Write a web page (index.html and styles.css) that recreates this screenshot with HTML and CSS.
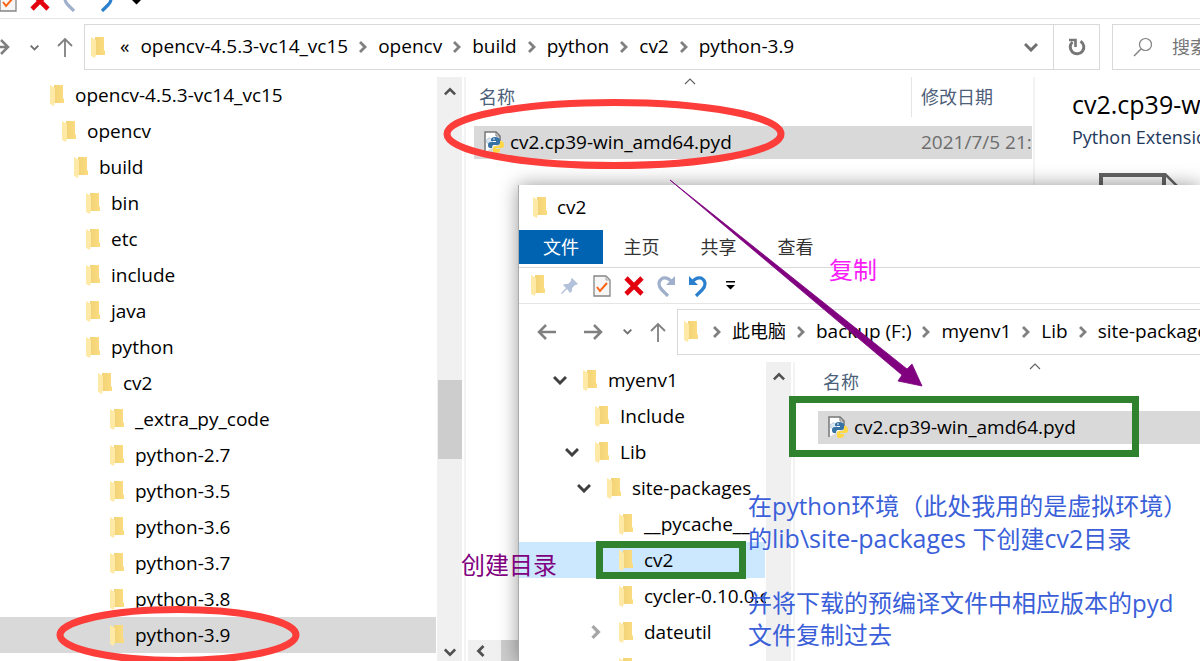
FILE: index.html
```html
<!DOCTYPE html>
<html lang="zh-CN">
<head>
<meta charset="utf-8">
<title>cv2</title>
<link rel="stylesheet" href="styles.css">
</head>
<body>
<svg class="defs" aria-hidden="true">
  <defs>
    <linearGradient id="fold-back" x1="0" x2="1"><stop offset="0" stop-color="#efcf72"/><stop offset="1" stop-color="#fbdc80"/></linearGradient>
    <symbol id="folder" viewBox="0 0 14 21"><path d="M0 0H13V13L14 14V18H4V0Z" fill="url(#fold-back)"/><path d="M0 0L5 3V16L4 21L0 19Z" fill="#ffe9a6"/></symbol>
    <symbol id="chev-right" viewBox="0 0 8 12"><path d="M1 1L6 6L1 11" fill="none" stroke="currentColor" stroke-width="2.8"/></symbol>
    <symbol id="chev-down" viewBox="0 0 14 10"><path d="M1 2L7 8L13 2" fill="none" stroke="currentColor" stroke-width="3"/></symbol>
    <symbol id="chev-up" viewBox="0 0 14 10"><path d="M1 9L7 3L13 9" fill="none" stroke="currentColor" stroke-width="3"/></symbol>
    <symbol id="sort" viewBox="0 0 12 7"><path d="M1 6L6 1L11 6" fill="none" stroke="#606060" stroke-width="1.1"/></symbol>
    <symbol id="arrow-left" viewBox="0 0 20 16"><path d="M19 8H2M9 1L2 8L9 15" fill="none" stroke="#808080" stroke-width="2.5"/></symbol>
    <symbol id="arrow-right" viewBox="0 0 20 16"><path d="M1 8H18M11 1L18 8L11 15" fill="none" stroke="#808080" stroke-width="2.5"/></symbol>
    <symbol id="arrow-up" viewBox="0 0 16 20"><path d="M8 20V2M1 9L8 2L15 9" fill="none" stroke="#808080" stroke-width="1.8"/></symbol>
    <symbol id="pin" viewBox="0 0 18 18"><path d="M11 1L17 7L15 8L14 8L11 11L11 14L9 16L6 12L1 17L0 17L1 15L5 11L2 8L4 7L7 7L10 4L10 2Z" fill="#b3c2da"/></symbol>
    <symbol id="check-page" viewBox="0 0 18 22"><path d="M1 1H13L17 5V21H1Z" fill="#f6f6f6" stroke="#858585" stroke-width="1.3"/><path d="M13 1V5H17" fill="none" stroke="#a5a5a5"/><path d="M4 12L7 16L14 8" fill="none" stroke="#fa6414" stroke-width="2"/></symbol>
    <symbol id="cross" viewBox="0 0 20 20"><path d="M2 2L18 18M18 2L2 18" stroke="#e3000f" stroke-width="4.6"/></symbol>
    <symbol id="undo" viewBox="0 0 20 22"><path d="M4 7Q8 2 13 3Q17 5 17 9Q17 12 14 15L8 21" fill="none" stroke="currentColor" stroke-width="3.2"/><path d="M1 1V10H10Z" fill="currentColor"/></symbol>
    <symbol id="redo" viewBox="0 0 20 22"><path d="M16 7Q12 2 7 3Q3 5 3 9Q3 12 6 15L12 21" fill="none" stroke="currentColor" stroke-width="3.2"/><path d="M19 1V10H10Z" fill="currentColor"/></symbol>
    <symbol id="more" viewBox="0 0 10 9"><path d="M1 0H10V1.500H1ZM1 4H10L5.500 8.500Z" fill="#000"/></symbol>
    <symbol id="refresh" viewBox="0 0 18 18"><path d="M12.500 3.200A6.800 6.800 0 1 1 4.500 4" fill="none" stroke="#777" stroke-width="3"/><path d="M1 2H7.500V9" fill="none" stroke="#777" stroke-width="2.6"/></symbol>
    <symbol id="search" viewBox="0 0 20 20"><circle cx="12.500" cy="7.500" r="6" fill="none" stroke="#808080" stroke-width="1.200"/><path d="M8 12L1 19" stroke="#808080" stroke-width="1.500"/></symbol>
    <symbol id="pyd" viewBox="0 0 20 22"><path d="M1 21V1H12L16 5V12" fill="#fff" stroke="#777" stroke-width="1.500"/><path d="M12 1V5H16" fill="none" stroke="#777"/><circle cx="5.500" cy="10" r="3" fill="#dbe7f2" stroke="#9ab8d2" stroke-dasharray="1.500 1"/><path d="M7 9Q7 6 11 6Q16 6 16 9V12Q16 14 13.500 14H10Q8 14 8 17H6Q4 17 4 14Q4 11 7 11H12V10H7Z" fill="#3672a4"/><path d="M16 10H18Q20 11 20 14Q20 17 18 17H12V18H16V20Q15 22 12 22Q9 22 9 20V17Q9 15 11 15H14Q16 15 16 12Z" fill="#ffd845"/><circle cx="10" cy="8" r=".8" fill="#fff"/></symbol>
  </defs>
</svg>

<main class="desktop">
  <section class="window back">
    <div class="quick">
      <button class="tool" aria-label="属性"><svg class="i-page"><use href="#check-page"/></svg></button>
      <button class="tool" aria-label="删除"><svg class="i-cross"><use href="#cross"/></svg></button>
      <button class="tool pale" aria-label="恢复"><svg class="i-undo"><use href="#redo"/></svg></button>
      <button class="tool blue" aria-label="撤消"><svg class="i-undo"><use href="#undo"/></svg></button>
      <button class="tool" aria-label="自定义"><svg class="i-more"><use href="#more"/></svg></button>
    </div>
    <div class="navbar">
      <button class="nav-btn" aria-label="前进"><svg class="i-arrow"><use href="#arrow-right"/></svg></button>
      <button class="nav-btn recent" aria-label="最近"><svg class="i-small"><use href="#chev-down"/></svg></button>
      <button class="nav-btn up" aria-label="上移"><svg class="i-up"><use href="#arrow-up"/></svg></button>
      <nav class="address">
        <svg class="i-folder"><use href="#folder"/></svg>
        <span class="dots">«</span>
        <a href="#a">opencv-4.5.3-vc14_vc15</a><svg class="sep"><use href="#chev-right"/></svg>
        <a href="#a">opencv</a><svg class="sep"><use href="#chev-right"/></svg>
        <a href="#a">build</a><svg class="sep"><use href="#chev-right"/></svg>
        <a href="#a">python</a><svg class="sep"><use href="#chev-right"/></svg>
        <a href="#a">cv2</a><svg class="sep"><use href="#chev-right"/></svg>
        <a href="#a">python-3.9</a>
        <button class="drop" aria-label="展开"><svg class="i-chev"><use href="#chev-down"/></svg></button>
        <button class="refresh" aria-label="刷新"><svg class="i-refresh"><use href="#refresh"/></svg></button>
      </nav>
      <label class="search"><svg class="i-search"><use href="#search"/></svg><input type="text" placeholder="搜索" aria-label="搜索"></label>
    </div>
    <div class="panes">
      <ul class="tree tree-back">
        <li class="d0"><svg class="i-folder"><use href="#folder"/></svg>opencv-4.5.3-vc14_vc15</li>
        <li class="d1"><svg class="i-folder"><use href="#folder"/></svg>opencv</li>
        <li class="d2"><svg class="i-folder"><use href="#folder"/></svg>build</li>
        <li class="d3"><svg class="i-folder"><use href="#folder"/></svg>bin</li>
        <li class="d3"><svg class="i-folder"><use href="#folder"/></svg>etc</li>
        <li class="d3"><svg class="i-folder"><use href="#folder"/></svg>include</li>
        <li class="d3"><svg class="i-folder"><use href="#folder"/></svg>java</li>
        <li class="d3"><svg class="i-folder"><use href="#folder"/></svg>python</li>
        <li class="d4"><svg class="i-folder"><use href="#folder"/></svg>cv2</li>
        <li class="d5"><svg class="i-folder"><use href="#folder"/></svg>_extra_py_code</li>
        <li class="d5"><svg class="i-folder"><use href="#folder"/></svg>python-2.7</li>
        <li class="d5"><svg class="i-folder"><use href="#folder"/></svg>python-3.5</li>
        <li class="d5"><svg class="i-folder"><use href="#folder"/></svg>python-3.6</li>
        <li class="d5"><svg class="i-folder"><use href="#folder"/></svg>python-3.7</li>
        <li class="d5"><svg class="i-folder"><use href="#folder"/></svg>python-3.8</li>
        <li class="d5 picked"><svg class="i-folder"><use href="#folder"/></svg>python-3.9</li>
      </ul>
      <div class="scroll">
        <svg class="i-scroll"><use href="#chev-up"/></svg>
        <div class="thumb"></div>
        <svg class="i-scroll"><use href="#chev-down"/></svg>
      </div>
      <div class="files">
        <div class="heads">
          <button class="head name">名称<svg class="i-sort"><use href="#sort"/></svg></button>
          <button class="head date">修改日期</button>
        </div>
        <div class="file"><svg class="i-pyd"><use href="#pyd"/></svg><span class="fname">cv2.cp39-win_amd64.pyd</span><span class="fdate">2021/7/5 21:35</span></div>
        <div class="hscroll"><svg class="i-left"><use href="#chev-right"/></svg><div class="hthumb"></div></div>
      </div>
      <aside class="details">
        <h2>cv2.cp39-win_amd64.pyd</h2>
        <p>Python Extension Module</p>
        <svg class="big-page" viewBox="0 0 100 80"><path d="M2 80V2H66L98 34V80" fill="#f5f5f5" stroke="#636363" stroke-width="4"/><path d="M65 2V34H98" fill="#fff" stroke="#636363" stroke-width="4"/></svg>
      </aside>
    </div>
  </section>

  <section class="window front">
    <header class="title"><svg class="i-folder"><use href="#folder"/></svg>cv2</header>
    <div class="tabs">
      <button class="tab active">文件</button><button class="tab">主页</button><button class="tab">共享</button><button class="tab">查看</button>
    </div>
    <div class="quick">
      <button class="tool" aria-label="文件夹"><svg class="i-folder"><use href="#folder"/></svg></button>
      <button class="tool" aria-label="固定"><svg class="i-pin"><use href="#pin"/></svg></button>
      <button class="tool" aria-label="属性"><svg class="i-page"><use href="#check-page"/></svg></button>
      <button class="tool" aria-label="删除"><svg class="i-cross"><use href="#cross"/></svg></button>
      <button class="tool pale" aria-label="恢复"><svg class="i-undo"><use href="#redo"/></svg></button>
      <button class="tool blue" aria-label="撤消"><svg class="i-undo"><use href="#undo"/></svg></button>
      <button class="tool" aria-label="自定义"><svg class="i-more"><use href="#more"/></svg></button>
    </div>
    <div class="navbar">
      <button class="nav-btn previous" aria-label="后退"><svg class="i-arrow"><use href="#arrow-left"/></svg></button>
      <button class="nav-btn" aria-label="前进"><svg class="i-arrow"><use href="#arrow-right"/></svg></button>
      <button class="nav-btn recent" aria-label="最近"><svg class="i-small"><use href="#chev-down"/></svg></button>
      <button class="nav-btn up" aria-label="上移"><svg class="i-up"><use href="#arrow-up"/></svg></button>
      <nav class="address">
        <svg class="i-folder"><use href="#folder"/></svg><svg class="sep"><use href="#chev-right"/></svg>
        <a class="han" href="#b">此电脑</a><svg class="sep"><use href="#chev-right"/></svg>
        <a href="#b">backup (F:)</a><svg class="sep"><use href="#chev-right"/></svg>
        <a href="#b">myenv1</a><svg class="sep"><use href="#chev-right"/></svg>
        <a href="#b">Lib</a><svg class="sep"><use href="#chev-right"/></svg>
        <a href="#b">site-packages</a>
      </nav>
    </div>
    <div class="panes">
      <ul class="tree tree-front">
        <li class="d0"><svg class="i-chev"><use href="#chev-down"/></svg><svg class="i-folder"><use href="#folder"/></svg>myenv1</li>
        <li class="d1"><span class="i-chev"></span><svg class="i-folder"><use href="#folder"/></svg>Include</li>
        <li class="d1"><svg class="i-chev"><use href="#chev-down"/></svg><svg class="i-folder"><use href="#folder"/></svg>Lib</li>
        <li class="d2"><svg class="i-chev"><use href="#chev-down"/></svg><svg class="i-folder"><use href="#folder"/></svg>site-packages</li>
        <li class="d3"><span class="i-chev"></span><svg class="i-folder"><use href="#folder"/></svg>__pycache__</li>
        <li class="d3 picked"><span class="i-chev"></span><svg class="i-folder"><use href="#folder"/></svg>cv2</li>
        <li class="d3"><span class="i-chev"></span><svg class="i-folder"><use href="#folder"/></svg>cycler-0.10.0.dist-info</li>
        <li class="d3"><svg class="i-chev closed"><use href="#chev-right"/></svg><svg class="i-folder"><use href="#folder"/></svg>dateutil</li>
        <li class="d3"><span class="i-chev"></span><svg class="i-folder"><use href="#folder"/></svg></li>
      </ul>
      <div class="scroll"><svg class="i-scroll"><use href="#chev-up"/></svg></div>
      <div class="files">
        <div class="heads"><button class="head name">名称<svg class="i-sort"><use href="#sort"/></svg></button></div>
        <div class="file"><svg class="i-pyd"><use href="#pyd"/></svg><span class="fname">cv2.cp39-win_amd64.pyd</span></div>
      </div>
    </div>
  </section>

  <svg class="ring ring-file" viewBox="0 0 342 70"><ellipse cx="171" cy="35" rx="167" ry="31.500"/></svg>
  <svg class="ring ring-dir" viewBox="0 0 244 58"><ellipse cx="122" cy="29" rx="118" ry="25.500"/></svg>
  <svg class="arrow" viewBox="0 0 254 208"><path d="M0 0L237 189L242 184L252 206L228 201L232 195Z" fill="#800080" stroke="#800080" stroke-width=".8" stroke-linejoin="round"/></svg>
  <div class="box box-file"></div>
  <div class="box box-dir"></div>
  <p class="note copy">复制</p>
  <p class="note create">创建目录</p>
  <p class="note explain">在python环境（此处我用的是虚拟环境）<br>的<span class="latin">lib\site-packages </span>下创建<span class="latin">cv2</span>目录<br><br>并将下载的预编译文件中相应版本的pyd<br>文件复制过去</p>
</main>
</body>
</html>
```
FILE: styles.css
```css
* { box-sizing: border-box; }
body { margin: 0; background: #fff; color: #000; font: 19px/24px "Open Sans", "Noto Sans CJK SC", sans-serif; }
button { padding: 0; border: 0; background: none; color: inherit; font: inherit; }
a { color: inherit; text-decoration: none; }
svg { flex: none; display: block; overflow: visible; }
.defs { position: absolute; width: 0; height: 0; }
.desktop { position: relative; height: 100vh; overflow: hidden; }
.window { display: flex; flex-direction: column; background: #fff; overflow: hidden; }
.back { height: 100%; }
.front { position: absolute; left: 518px; top: 185px; right: 0; bottom: 0; border-left: 1px solid #aaa; box-shadow: 0 0 18px rgba(0, 0, 0, .4); }
.han, .tabs, .heads { font-size: 18px; }

.i-folder { width: 14px; height: 21px; }
.i-page { width: 18px; height: 22px; }
.i-cross { width: 20px; height: 20px; }
.i-undo { width: 20px; height: 22px; }
.i-pin { width: 18px; height: 18px; }
.i-more { width: 10px; height: 9px; }
.i-arrow { width: 20px; height: 16px; }
.i-small { width: 9px; height: 7px; }
.i-up { width: 16px; height: 20px; }
.i-chev { width: 14px; height: 10px; }
.i-refresh { width: 18px; height: 18px; }
.i-search { width: 20px; height: 20px; }
.i-scroll { width: 12px; height: 10px; color: #505050; }
.i-pyd { width: 20px; height: 22px; }
.i-sort { width: 12px; height: 7px; }
.sep { width: 8px; height: 12px; color: #808080; }
.pale { color: #a0b0cc; }
.blue { color: #2a80cc; }

.quick { display: flex; align-items: center; flex: none; height: 37px; border-top: 1px solid #d9d9d9; border-bottom: 1px solid #e5e5e5; }
.back .quick { margin: -18px 0 0 -8px; }
.front .quick { padding-left: 3px; }
.tool { display: flex; align-items: center; justify-content: center; width: 32px; height: 32px; }
.navbar { display: flex; align-items: center; flex: none; height: 58px; padding-bottom: 2px; }
.back .navbar { margin-left: -10px; }
.front .navbar { padding: 0 0 3px 18px; }
.previous { margin-right: 26px; }
.recent { margin: 0 18px 0 20px; color: #707070; }
.up { margin-right: 11px; }
.address { display: flex; align-items: center; flex: 1; height: 46px; min-width: 0; gap: 11px; padding-left: 6px; border: 1px solid #d9d9d9; white-space: nowrap; overflow: hidden; }
.address a, .dots { padding-bottom: 2px; }
.address .i-folder { margin-right: 4px; }
.front .address { border-right: 0; }
.drop { margin-left: auto; margin-right: 4px; color: #707070; }
.refresh { display: flex; align-items: center; justify-content: center; align-self: stretch; width: 46px; border-left: 1px solid #d9d9d9; }
.search { display: flex; align-items: center; width: 88px; height: 46px; margin-left: 12px; gap: 19px; padding-left: 20px; border: 1px solid #d9d9d9; border-right: 0; overflow: hidden; }
.search input { width: 100px; flex: none; border: 0; padding: 0; font: inherit; font-size: 18px; background: none; }
.search input::placeholder { color: #777; opacity: 1; }

.panes { display: flex; flex: 1; min-height: 0; }
.tree { flex: none; margin: 0; padding: 0; list-style: none; overflow: hidden; }
.tree li { display: flex; align-items: center; gap: 11px; height: 36px; white-space: nowrap; }
.tree-back { width: 437px; padding-right: 1px; }
.tree-back .picked { background: #d9d9d9; }
.tree-front { width: 247px; padding-right: 1px; }
.tree-front .picked { background: #cce8ff; }
.tree-back .d0 { padding-left: 50px; }
.tree-back .d1 { padding-left: 62px; }
.tree-back .d2 { padding-left: 74px; }
.tree-back .d3 { padding-left: 86px; }
.tree-back .d4 { padding-left: 98px; }
.tree-back .d5 { padding-left: 110px; }
.tree-front .i-chev { flex: none; margin-right: 5px; color: #404040; }
.tree-front .closed { color: #a6a6a6; height: 14px; }
.tree-front .d0 { padding-left: 34px; }
.tree-front .d1 { padding-left: 46px; }
.tree-front .d2 { padding-left: 58px; }
.tree-front .d3 { padding-left: 70px; }

.scroll { display: flex; flex-direction: column; align-items: center; flex: none; width: 25px; padding: 9px 0 4px; background: #f0f0f0; }
.thumb { width: 24px; height: 79px; margin: 284px 0 auto; background: #cdcdcd; }
.files { display: flex; flex-direction: column; flex: 1; min-width: 0; margin-left: 2px; border-left: 2px solid #f3f3f3; }
.heads { display: flex; height: 40px; color: #4c607a; }
.head { text-align: left; }
.name { position: relative; flex: 1; padding-left: 13px; }
.date { width: 122px; padding-left: 9px; border-left: 1px solid #e5e5e5; }
.i-sort { position: absolute; left: 218px; top: 1px; }
.file { display: flex; align-items: center; height: 33px; margin: 9px 1px 0 8px; padding: 0 0 1px 10px; gap: 6px; background: #d9d9d9; white-space: nowrap; overflow: hidden; }
.fname { flex: 1; }
.fdate { width: 111px; color: #6d6d6d; overflow: hidden; }
.front .name { padding-left: 28px; }
.front .i-sort { left: 234px; }
.front .file { margin: 9px 0 0 23px; }
.hscroll { display: flex; align-items: center; height: 21px; margin: auto 0 0 2px; padding-left: 8px; background: #f0f0f0; gap: 16px; overflow: hidden; }
.i-left { width: 9px; height: 12px; color: #505050; transform: rotate(180deg); }
.hthumb { width: 300px; height: 21px; background: #cdcdcd; }
.details { flex: none; width: 167px; padding: 11px 0 0 37px; border-left: 2px solid #f3f3f3; white-space: nowrap; overflow: hidden; }
.details h2 { margin: 0; font-size: 25px; line-height: 32px; font-weight: 400; }
.details p { margin: 5px 0 24px; font-size: 18px; color: #1e395b; }
.big-page { width: 100px; height: 80px; margin-left: 27px; }

.title { display: flex; align-items: center; flex: none; height: 45px; padding: 0 0 1px 14px; gap: 10px; }
.tabs { display: flex; flex: none; height: 37px; padding-bottom: 3px; color: #333; }
.tab { width: 77px; }
.active { width: 84px; background: #0063b1; color: #fff; }

.ring { position: absolute; fill: none; stroke: #fc3d39; stroke-width: 7; }
.ring-file { left: 443px; top: 99px; width: 342px; height: 70px; }
.ring-dir { left: 56px; top: 606px; width: 244px; height: 58px; }
.arrow { position: absolute; left: 670px; top: 180px; width: 254px; height: 208px; }
.box { position: absolute; border: 7px solid #30822e; }
.box-file { left: 789px; top: 396px; width: 350px; height: 61px; }
.box-dir { left: 596px; top: 541px; width: 150px; height: 38px; }
.note { position: absolute; margin: 0; font-size: 24px; line-height: 32px; white-space: nowrap; }
.latin { font-size: 25px; }
.copy { left: 829px; top: 254px; color: #f81cf8; }
.create { left: 461px; top: 549px; color: #800080; }
.explain { left: 748px; top: 490px; color: #3a5fd9; }
```
